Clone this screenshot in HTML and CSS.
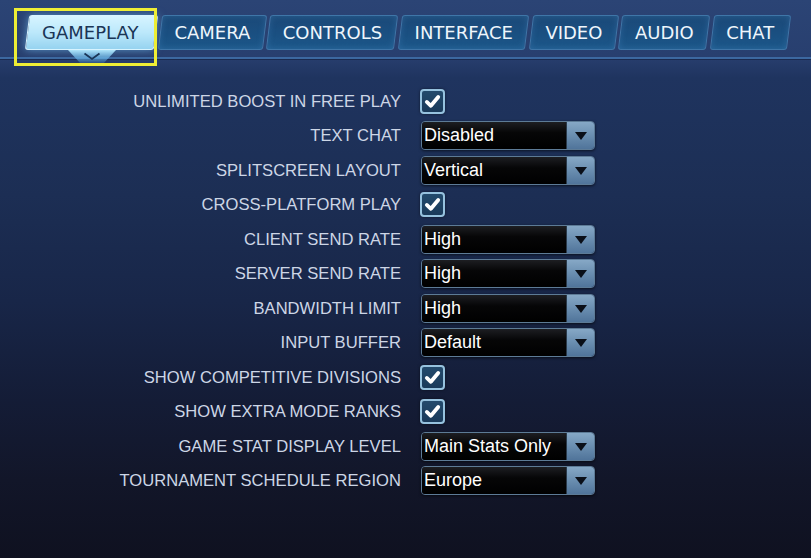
FILE: index.html
```html
<!DOCTYPE html>
<html>
<head>
<meta charset="utf-8">
<link rel="stylesheet" href="styles.css">
</head>
<body>
<div class="screen">
  <nav class="tabs">
    <div class="tab active">
      <span class="tab-label">GAMEPLAY</span>
      <svg class="pointer" width="48" height="18" viewBox="0 0 48 18">
        <defs>
          <linearGradient id="pg" x1="0" y1="0" x2="0" y2="1">
            <stop offset="0" stop-color="#b0e6fa"/>
            <stop offset="0.6" stop-color="#64aee0" stop-opacity="0.75"/>
            <stop offset="1" stop-color="#3f8cc8" stop-opacity="0.15"/>
          </linearGradient>
        </defs>
        <path d="M0 0 H48 L35 14 H13 Z" fill="url(#pg)"/>
        <path d="M16.5 3.5 L24 9 L31.5 3.5" fill="none" stroke="#1a3556" stroke-width="1.8"/>
      </svg>
      <span class="highlight"></span>
    </div>
    <div class="tab"><span class="tab-label">CAMERA</span></div>
    <div class="tab"><span class="tab-label">CONTROLS</span></div>
    <div class="tab"><span class="tab-label">INTERFACE</span></div>
    <div class="tab"><span class="tab-label">VIDEO</span></div>
    <div class="tab"><span class="tab-label">AUDIO</span></div>
    <div class="tab"><span class="tab-label">CHAT</span></div>
  </nav>
  <div class="divider"></div>

  <div class="settings">
    <div class="label">UNLIMITED BOOST IN FREE PLAY</div>
    <div class="control"><span class="check"><svg viewBox="0 0 20 20" width="19" height="19"><path d="M4 10.5 L8.3 14.5 L16 5.2" fill="none" stroke="#fff" stroke-width="4" stroke-linecap="round" stroke-linejoin="round"/></svg></span></div>

    <div class="label">TEXT CHAT</div>
    <div class="control"><span class="select"><span class="value">Disabled</span><span class="arrow"></span></span></div>

    <div class="label">SPLITSCREEN LAYOUT</div>
    <div class="control"><span class="select"><span class="value">Vertical</span><span class="arrow"></span></span></div>

    <div class="label">CROSS-PLATFORM PLAY</div>
    <div class="control"><span class="check"><svg viewBox="0 0 20 20" width="19" height="19"><path d="M4 10.5 L8.3 14.5 L16 5.2" fill="none" stroke="#fff" stroke-width="4" stroke-linecap="round" stroke-linejoin="round"/></svg></span></div>

    <div class="label">CLIENT SEND RATE</div>
    <div class="control"><span class="select"><span class="value">High</span><span class="arrow"></span></span></div>

    <div class="label">SERVER SEND RATE</div>
    <div class="control"><span class="select"><span class="value">High</span><span class="arrow"></span></span></div>

    <div class="label">BANDWIDTH LIMIT</div>
    <div class="control"><span class="select"><span class="value">High</span><span class="arrow"></span></span></div>

    <div class="label">INPUT BUFFER</div>
    <div class="control"><span class="select"><span class="value">Default</span><span class="arrow"></span></span></div>

    <div class="label">SHOW COMPETITIVE DIVISIONS</div>
    <div class="control"><span class="check"><svg viewBox="0 0 20 20" width="19" height="19"><path d="M4 10.5 L8.3 14.5 L16 5.2" fill="none" stroke="#fff" stroke-width="4" stroke-linecap="round" stroke-linejoin="round"/></svg></span></div>

    <div class="label">SHOW EXTRA MODE RANKS</div>
    <div class="control"><span class="check"><svg viewBox="0 0 20 20" width="19" height="19"><path d="M4 10.5 L8.3 14.5 L16 5.2" fill="none" stroke="#fff" stroke-width="4" stroke-linecap="round" stroke-linejoin="round"/></svg></span></div>

    <div class="label">GAME STAT DISPLAY LEVEL</div>
    <div class="control"><span class="select"><span class="value">Main Stats Only</span><span class="arrow"></span></span></div>

    <div class="label">TOURNAMENT SCHEDULE REGION</div>
    <div class="control"><span class="select"><span class="value">Europe</span><span class="arrow"></span></span></div>
  </div>
</div>
</body>
</html>
```

FILE: styles.css
```css
html, body {
  margin: 0;
  padding: 0;
}
body {
  width: 811px;
  height: 558px;
  overflow: hidden;
  background: linear-gradient(180deg, #2b4475 0%, #283f6f 10%, #1f345f 14%, #1c2e54 35%, #182648 54%, #141c36 72%, #121629 86%, #0f1120 100%);
  font-family: "Liberation Sans", Arial, sans-serif;
}
.screen {
  padding-top: 15px;
}
.tabs {
  display: flex;
  gap: 3.5px;
  padding-left: 27px;
  height: 35px;
}
.tab {
  position: relative;
  height: 35px;
  padding: 0 14.5px;
  display: flex;
  align-items: center;
  justify-content: center;
}
.tab::before {
  content: "";
  position: absolute;
  inset: 0;
  transform: skewX(-7deg);
  background: linear-gradient(180deg, #1b4978 0%, #1a5082 60%, #1c5789 100%);
  border: 1px solid #3f76a8;
  border-radius: 3px;
  box-shadow: inset 0 0 6px rgba(90, 160, 220, 0.25);
}
.tab-label {
  position: relative;
  font-family: "DejaVu Sans", sans-serif;
  font-size: 18px;
  color: #eef6fc;
  line-height: 1;
  padding-top: 1px;
}
.tab.active {
  padding: 0 18px 0 15px;
}
.tab.active::before {
  background: linear-gradient(180deg, #d6f4ff 0%, #bce8fb 50%, #96d3f0 100%);
  border-color: #d8f4ff;
  box-shadow: 0 0 8px rgba(120, 200, 250, 0.6);
}
.tab.active .tab-label {
  color: #1a3556;
}
.pointer {
  position: absolute;
  left: 50%;
  top: 35px;
  margin-left: -24px;
}
.highlight {
  position: absolute;
  left: -13px;
  top: -7px;
  right: -1px;
  bottom: -16px;
  border: 3px solid #eeee35;
  pointer-events: none;
}
.divider {
  margin-top: 7px;
  height: 2px;
  background: #3c68a0;
  box-shadow: 0 1px 0 rgba(20, 30, 60, 0.6);
}
.settings {
  display: grid;
  grid-template-columns: 401px 1fr;
  grid-auto-rows: 34.5px;
  column-gap: 19px;
  margin-top: 25px;
}
.label {
  display: flex;
  align-items: center;
  justify-content: flex-end;
  font-size: 16.6px;
  color: #cdd6e6;
  white-space: nowrap;
  padding-top: 1px;
}
.control {
  display: flex;
  align-items: center;
}
.check {
  box-sizing: border-box;
  width: 25px;
  height: 25px;
  border: 2px solid #96c2de;
  border-radius: 4px;
  background: linear-gradient(180deg, #234a6c, #1a3a5a);
  display: flex;
  align-items: center;
  justify-content: center;
  box-shadow: 0 0 3px rgba(0, 0, 0, 0.5);
}
.select {
  box-sizing: border-box;
  width: 174px;
  height: 29px;
  margin-left: 1px;
  display: flex;
  border: 1px solid #5d7b96;
  border-radius: 4px;
  overflow: hidden;
  box-shadow: 0 1px 3px rgba(0, 0, 0, 0.6);
}
.value {
  flex: 1;
  background: linear-gradient(180deg, #1d1e22 0%, #060607 40%, #000 100%);
  color: #fff;
  font-size: 18px;
  line-height: 27px;
  padding-left: 2px;
  white-space: nowrap;
  border-right: 1px solid #2a3a4a;
}
.arrow {
  width: 27px;
  background: linear-gradient(180deg, #86a8c6 0%, #6a8eb0 50%, #50749a 100%);
  display: flex;
  align-items: center;
  justify-content: center;
}
.arrow::after {
  content: "";
  width: 0;
  height: 0;
  border-left: 6px solid transparent;
  border-right: 6px solid transparent;
  border-top: 8px solid #0a0f18;
  margin-top: 1px;
}
```
